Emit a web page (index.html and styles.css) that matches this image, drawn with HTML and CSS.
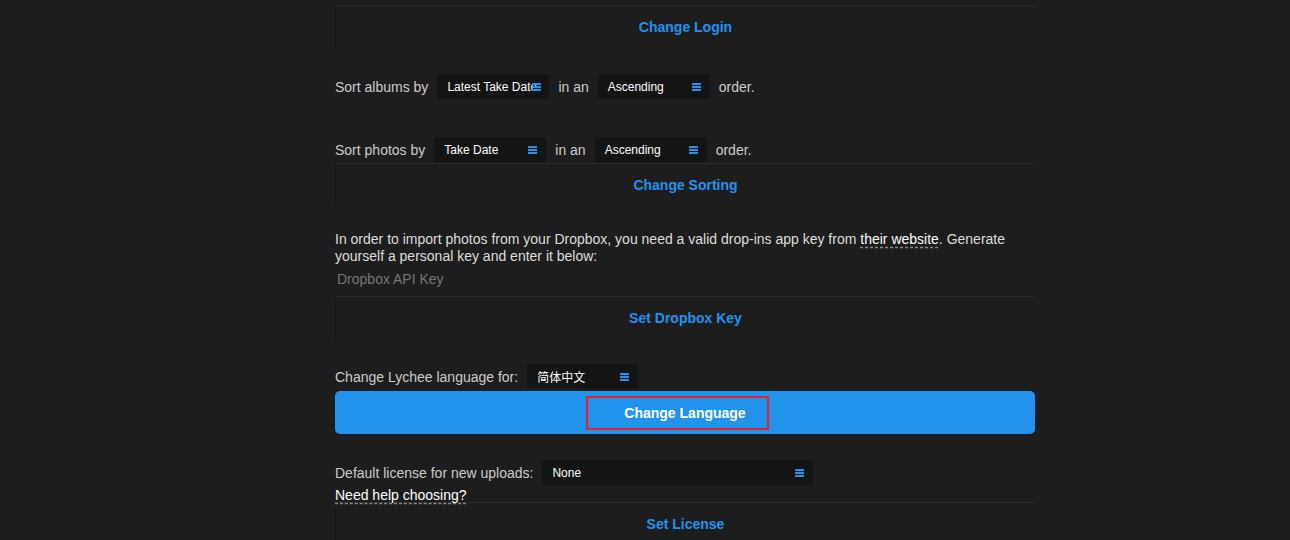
FILE: index.html
```html
<!DOCTYPE html>
<html>
<head>
    <meta charset="utf-8">
    <title>Settings</title>
    <link rel="stylesheet" href="styles.css">
</head>
<body>
    <div class="settings">
        <div class="button first">Change Login</div>

        <div class="row row-albums">
            <span>Sort albums by</span>
            <div class="select w112"><span>Latest Take Date</span><i class="bars"></i></div>
            <span>in an</span>
            <div class="select w112"><span>Ascending</span><i class="bars"></i></div>
            <span>order.</span>
        </div>

        <div class="row row-photos">
            <span>Sort photos by</span>
            <div class="select w112"><span>Take Date</span><i class="bars"></i></div>
            <span>in an</span>
            <div class="select w112"><span>Ascending</span><i class="bars"></i></div>
            <span>order.</span>
        </div>
        <div class="button tight">Change Sorting</div>

        <p class="note">In order to import photos from your Dropbox, you need a valid drop-ins app key from <a class="dashed">their website</a>. Generate yourself a personal key and enter it below:</p>
        <div class="input">Dropbox API Key</div>
        <div class="button after-input">Set Dropbox Key</div>

        <div class="row row-lang">
            <span>Change Lychee language for:</span>
            <div class="select w111"><span>简体中文</span><i class="bars"></i></div>
        </div>
        <div class="button blue"><span class="focus">Change Language</span></div>

        <div class="row row-license">
            <span>Default license for new uploads:</span>
            <div class="select w271"><span>None</span><i class="bars"></i></div>
        </div>
        <div class="help"><a class="dashed">Need help choosing?</a></div>
        <div class="button last">Set License</div>
    </div>
</body>
</html>
```

FILE: styles.css
```css
body {
    margin: 0;
    background-color: #1d1d1d;
    font-family: "Liberation Sans", Arial, "Noto Sans CJK SC", sans-serif;
    font-size: 14px;
    color: #ccc;
    overflow: hidden;
}

.settings {
    width: 700px;
    margin-left: 335px;
    padding-top: 5px;
}

.button {
    height: 43px;
    display: flex;
    align-items: center;
    justify-content: center;
    box-sizing: border-box;
    border-top: 1px solid #2a2a2a;
    border-left: 1px solid #171717;
    color: #2293ec;
    font-weight: bold;
    font-size: 14px;
}

.button.tight {
    margin-top: 1px;
}

.button.after-input {
    margin-top: 7px;
}

.button.blue {
    margin-top: 2px;
    background-color: #2293ec;
    color: #fff;
    border: none;
    border-radius: 5px;
}

.focus {
    display: inline-block;
    padding: 7px 21px 7px 36px;
    margin-right: 15px;
    border: 2px solid #e5222e;
}

.row {
    display: flex;
    align-items: center;
    gap: 9px;
    height: 25px;
}

.row-albums {
    margin-top: 26px;
}

.row-photos {
    margin-top: 38px;
}

.row-lang {
    margin-top: 25px;
}

.row-license {
    margin-top: 26px;
}

.select {
    height: 25px;
    box-sizing: border-box;
    display: flex;
    align-items: center;
    justify-content: space-between;
    padding: 0 9px 0 10px;
    background-color: #141414;
    border-radius: 3px;
    color: #fff;
    font-size: 12px;
    white-space: nowrap;
}

.w112 { width: 112px; }
.w111 { width: 111px; }
.w271 { width: 271px; }

.bars {
    flex: none;
    width: 9px;
    height: 8px;
    margin-left: -5px;
    background: linear-gradient(#2293ec 0 2px, transparent 2px 3px, #2293ec 3px 5px, transparent 5px 6px, #2293ec 6px 8px);
}

.note {
    margin: 25px 0 0;
    line-height: 17px;
    color: #ddd;
}

.dashed {
    color: #fff;
    text-decoration: underline dashed #888;
    text-underline-offset: 3px;
}

.input {
    margin-top: 4px;
    height: 20px;
    line-height: 20px;
    padding-left: 2px;
    color: #777;
}

.help {
    margin-top: 2px;
    line-height: 16px;
    color: #eee;
}

.button.last {
    margin-top: -1px;
}
```
